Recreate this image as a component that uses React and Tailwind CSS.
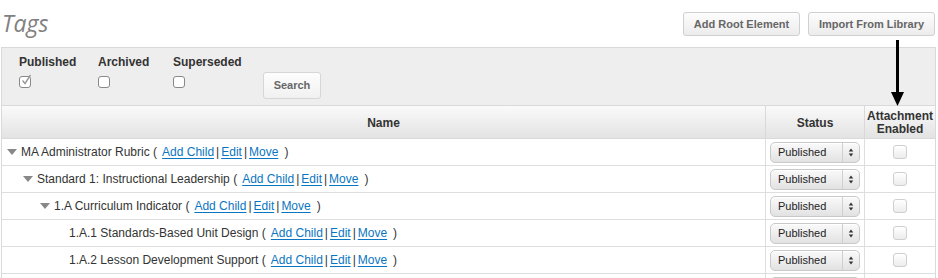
import React from "react";

const rows = [
  { level: 0, tri: true, name: "MA Administrator Rubric" },
  { level: 1, tri: true, name: "Standard 1: Instructional Leadership" },
  { level: 2, tri: true, name: "1.A Curriculum Indicator" },
  { level: 3, tri: false, name: "1.A.1 Standards-Based Unit Design" },
  { level: 3, tri: false, name: "1.A.2 Lesson Development Support" },
  { level: 3, tri: false, name: "" },
];

const padFor = ["pl-[5px]", "pl-[21px]", "pl-[38px]", "pl-[67px]"];

function Checkbox({ checked }) {
  return (
    <span className="relative inline-block w-[12px] h-[12px] rounded-[3px] border border-[#888] bg-white">
      {checked && (
        <svg viewBox="0 0 12 12" className="absolute left-[0px] top-[-3px] w-[12px] h-[12px]" fill="none">
          <path d="M2.5 6.5 L5 9.5 L10.5 1" stroke="#999" strokeWidth="1.4" />
        </svg>
      )}
    </span>
  );
}

function Link({ children }) {
  return <a className="text-[#0a76c2] underline underline-offset-[2px] decoration-[#0a76c2]">{children}</a>;
}

function Select() {
  return (
    <div className="flex items-center w-[90px] h-[21px] rounded-[5px] border border-[#c9c9c9] bg-gradient-to-b from-[#fafafa] to-[#e2e2e2] shadow-[inset_0_1px_0_#fff]">
      <span className="flex-1 pl-[7px] text-[11px] text-[#222]">Published</span>
      <span className="w-px h-[19px] bg-[#cfcfcf]" />
      <span className="w-[16px] flex justify-center">
        <svg viewBox="0 0 6 10" className="w-[6px] h-[9px]">
          <path d="M3 0.5 L5.5 4 L0.5 4 Z" fill="#333" />
          <path d="M3 9.5 L5.5 6 L0.5 6 Z" fill="#333" />
        </svg>
      </span>
    </div>
  );
}

export default function App() {
  return (
    <div className="relative w-[938px] h-[278px] bg-white overflow-hidden" style={{ fontFamily: '"Liberation Sans", Arial, sans-serif' }}>
      <div className="flex items-start justify-between h-[47px]">
        <div className="pl-[2px] pt-[6px] text-[23px] italic text-[#808080]" style={{ fontFamily: '"Open Sans", sans-serif' }}>
          Tags
        </div>
        <div className="flex gap-[8px] pt-[12px] pr-[3px]">
          <button className="h-[24px] w-[117px] rounded-[3px] border border-[#d0d0d0] bg-gradient-to-b from-[#fdfdfd] to-[#ececec] text-[11px] font-bold text-[#666]">
            Add Root Element
          </button>
          <button className="h-[24px] w-[127px] rounded-[3px] border border-[#d0d0d0] bg-gradient-to-b from-[#fdfdfd] to-[#ececec] text-[11px] font-bold text-[#666]">
            Import From Library
          </button>
        </div>
      </div>

      <div className="ml-px w-[935px] border border-[#d9d9d9]">
        <div className="h-[58px] bg-[#eeeeee] flex items-start pl-[17px] pt-[7px] border-b border-[#d9d9d9]">
          <div className="w-[79px] flex flex-col">
            <span className="text-[12px] font-bold text-[#333] leading-[14px]">Published</span>
            <span className="mt-[2px]"><Checkbox checked /></span>
          </div>
          <div className="w-[75px] flex flex-col">
            <span className="text-[12px] font-bold text-[#333] leading-[14px]">Archived</span>
            <span className="mt-[2px]"><Checkbox /></span>
          </div>
          <div className="w-[90px] flex flex-col">
            <span className="text-[12px] font-bold text-[#333] leading-[14px]">Superseded</span>
            <span className="mt-[2px]"><Checkbox /></span>
          </div>
          <button className="mt-[17px] h-[27px] w-[58px] rounded-[3px] border border-[#d6d6d6] bg-gradient-to-b from-[#fdfdfd] to-[#f1f1f1] text-[11px] font-bold text-[#666]">
            Search
          </button>
        </div>

        <div className="flex h-[33px] bg-gradient-to-b from-[#fafafa] to-[#e3e3e3] border-b border-[#d9d9d9] text-[12px] font-bold text-[#333]">
          <div className="w-[763px] flex items-center justify-center pt-[1px]">Name</div>
          <div className="w-[99px] border-l border-[#d9d9d9] flex items-center justify-center pt-[1px]">Status</div>
          <div className="flex-1 border-l border-[#d9d9d9] flex flex-col items-center justify-center leading-[13px] pt-[1px]">
            <span>Attachment</span>
            <span>Enabled</span>
          </div>
        </div>

        {rows.map((r, i) => (
          <div key={i} className="flex h-[27px] border-b border-[#dedede] text-[12px] text-[#333]">
            <div className={`w-[763px] flex items-center ${padFor[r.level]}`}>
              {r.name && (
                <>
                  {r.tri && (
                    <svg viewBox="0 0 10 6" className="w-[10px] h-[6px] mr-[4px]">
                      <path d="M0 0 L10 0 L5 6 Z" fill="#888" />
                    </svg>
                  )}
                  <span>{r.name} (</span>
                  <span className="ml-[5px]"><Link>Add Child</Link></span>
                  <span className="mx-[2px]">|</span>
                  <Link>Edit</Link>
                  <span className="mx-[2px]">|</span>
                  <Link>Move</Link>
                  <span className="ml-[6px]">)</span>
                </>
              )}
            </div>
            <div className="w-[99px] border-l border-[#dedede] flex items-center pl-[4px]">
              <Select />
            </div>
            <div className="flex-1 border-l border-[#dedede] flex items-center justify-center">
              <span className="inline-block w-[14px] h-[14px] rounded-[3px] border border-[#cfcfcf] bg-gradient-to-b from-[#fff] to-[#ececec]" />
            </div>
          </div>
        ))}
      </div>

      <div className="absolute left-[896px] top-[40px] w-[3px] h-[54px] bg-black" />
      <svg className="absolute left-[891px] top-[92px]" width="13" height="14" viewBox="0 0 13 14">
        <path d="M0 0 L13 0 L6.5 14 Z" fill="#000" />
      </svg>
    </div>
  );
}
